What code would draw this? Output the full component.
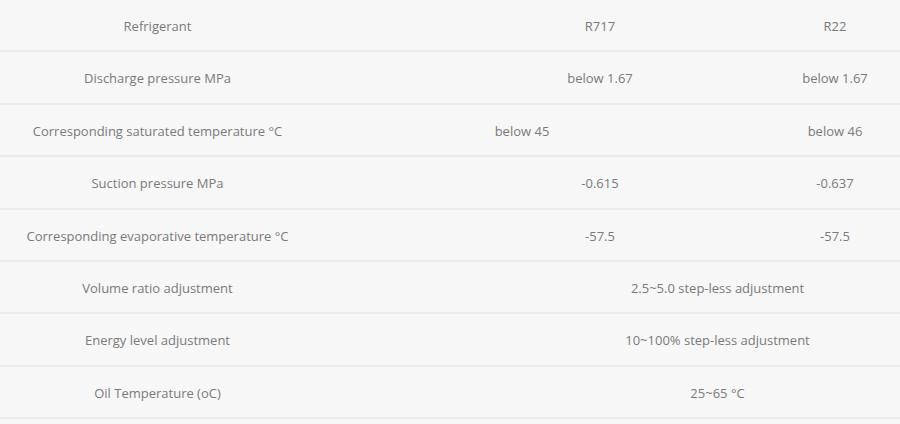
const rowCls =
  "flex h-[52.4px] items-center border-b-2 border-[#ebebeb] pt-[3px] text-center";

type Cell = { text: string; w: string };

const rows: Cell[][] = [
  [
    { text: "Refrigerant", w: "w-[315px]" },
    { text: "", w: "w-[115px]" },
    { text: "R717", w: "w-[340px]" },
    { text: "R22", w: "w-[130px]" },
  ],
  [
    { text: "Discharge pressure MPa", w: "w-[315px]" },
    { text: "", w: "w-[115px]" },
    { text: "below 1.67", w: "w-[340px]" },
    { text: "below 1.67", w: "w-[130px]" },
  ],
  [
    { text: "Corresponding saturated temperature °C", w: "w-[315px]" },
    { text: "below 45", w: "w-[414px]" },
    { text: "", w: "w-[41px]" },
    { text: "below 46", w: "w-[130px]" },
  ],
  [
    { text: "Suction pressure MPa", w: "w-[315px]" },
    { text: "", w: "w-[115px]" },
    { text: "-0.615", w: "w-[340px]" },
    { text: "-0.637", w: "w-[130px]" },
  ],
  [
    { text: "Corresponding evaporative temperature °C", w: "w-[315px]" },
    { text: "", w: "w-[115px]" },
    { text: "-57.5", w: "w-[340px]" },
    { text: "-57.5", w: "w-[130px]" },
  ],
  [
    { text: "Volume ratio adjustment", w: "w-[315px]" },
    { text: "", w: "w-[220px]" },
    { text: "2.5~5.0 step-less adjustment", w: "w-[365px]" },
  ],
  [
    { text: "Energy level adjustment", w: "w-[315px]" },
    { text: "", w: "w-[220px]" },
    { text: "10~100% step-less adjustment", w: "w-[365px]" },
  ],
  [
    { text: "Oil Temperature (oC)", w: "w-[315px]" },
    { text: "", w: "w-[220px]" },
    { text: "25~65 °C", w: "w-[365px]" },
  ],
];

export default function App() {
  return (
    <div className="h-[424px] w-[900px] overflow-hidden bg-[#f7f7f7] font-['Open_Sans',sans-serif] text-[13px] text-[#7a7a7a]">
      {rows.map((row, i) => (
        <div key={i} className={rowCls}>
          {row.map((cell, j) => (
            <div key={j} className={cell.w + " shrink-0 whitespace-nowrap"}>
              {cell.text}
            </div>
          ))}
        </div>
      ))}
    </div>
  );
}
